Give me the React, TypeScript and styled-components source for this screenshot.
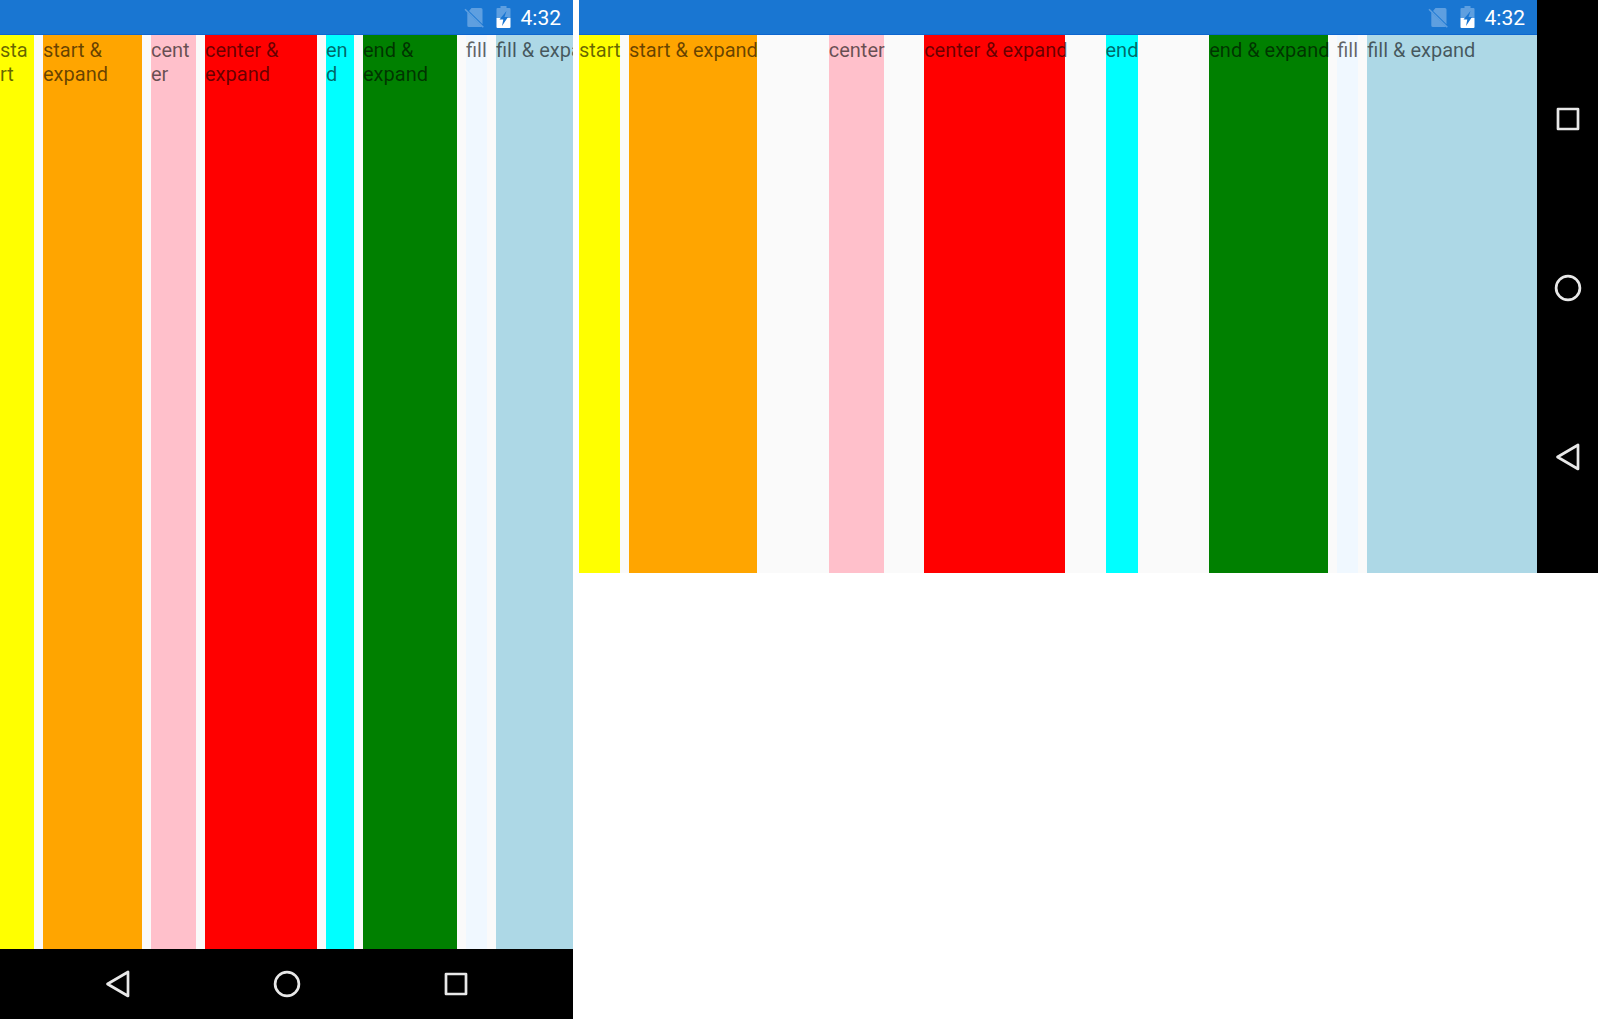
import React from "react";
import styled, { createGlobalStyle } from "styled-components";

const GlobalStyle = createGlobalStyle`
  *, *::before, *::after { box-sizing: border-box; }
  body {
    margin: 0;
    background: #fff;
    font-family: Roboto, "Noto Sans", sans-serif;
  }
`;

type Orientation = "portrait" | "landscape";
type Align = "flex-start" | "center" | "flex-end" | "stretch";

const Page = styled.main`
  display: grid;
  grid-template-columns: 573fr 1019fr;
  gap: 6px;
  align-items: start;
  padding-right: 2px;
`;

const Device = styled.section<{ $orientation: Orientation }>`
  display: flex;
  flex-direction: ${(p) => (p.$orientation === "portrait" ? "column" : "row")};
  min-width: 0;
  overflow: hidden;
  aspect-ratio: ${(p) => (p.$orientation === "portrait" ? "9 / 16" : "16 / 9")};
`;

const Screen = styled.div`
  display: flex;
  flex: 1;
  flex-direction: column;
  min-width: 0;
  min-height: 0;
`;

const StatusBar = styled.header`
  display: flex;
  flex: none;
  align-items: center;
  justify-content: flex-end;
  height: 35px;
  padding: 2px 12px 0 0;
  background: #1976d2;
  border-bottom: 1px solid #0d66cf;
  color: #fff;
`;

const StatusIcon = styled.svg<{ $width: number }>`
  display: block;
  width: ${(p) => p.$width}px;
  height: 24px;
  margin-right: 10px;
`;

const Clock = styled.time`
  font-size: 21px;
  line-height: 24px;
`;

const Stack = styled.div`
  display: flex;
  flex: 1;
  gap: 9px;
  min-height: 0;
  overflow: hidden;
  background: #fafafa;
`;

const Slot = styled.div<{ $basis: number; $expand: boolean; $align: Align }>`
  display: flex;
  flex: ${(p) => (p.$expand ? 1 : 0)} 0 ${(p) => p.$basis}px;
  justify-content: ${(p) => p.$align};
  min-width: 0;
`;

const Label = styled.div<{ $color: string; $basis: number; $fill: boolean; $wrap: boolean }>`
  flex: ${(p) => (p.$fill ? 1 : 0)} 0 ${(p) => p.$basis}px;
  min-width: 0;
  padding-top: 3px;
  background: ${(p) => p.$color};
  color: rgba(0, 0, 0, 0.6);
  font-size: 20px;
  line-height: 24px;
  white-space: ${(p) => (p.$wrap ? "normal" : "nowrap")};
  overflow-wrap: anywhere;
`;

const NavBar = styled.nav<{ $orientation: Orientation }>`
  display: flex;
  flex: 0 0 ${(p) => (p.$orientation === "portrait" ? "70px" : "61px")};
  flex-direction: ${(p) => (p.$orientation === "portrait" ? "row" : "column-reverse")};
  padding: ${(p) => (p.$orientation === "portrait" ? "0 33px" : "34px 0 32px")};
  background: #000;
`;

const NavButton = styled.button`
  display: flex;
  flex: 1;
  align-items: center;
  justify-content: center;
  padding: 0;
  border: 0;
  background: none;
  color: #e8e8e8;
`;

const NavIcon = styled.svg`
  display: block;
  width: 30px;
  height: 30px;
  fill: none;
  stroke: currentColor;
  stroke-width: 2.7;
  stroke-linejoin: round;
`;

interface Item {
  text: string;
  color: string;
  align: Align;
  expand: boolean;
  portrait: number;
  landscape: number;
}

const items: Item[] = [
  { text: "start", color: "yellow", align: "flex-start", expand: false, portrait: 34, landscape: 41 },
  { text: "start & expand", color: "orange", align: "flex-start", expand: true, portrait: 99, landscape: 128 },
  { text: "center", color: "pink", align: "center", expand: false, portrait: 45, landscape: 55 },
  { text: "center & expand", color: "red", align: "center", expand: true, portrait: 112, landscape: 141 },
  { text: "end", color: "cyan", align: "flex-end", expand: false, portrait: 28, landscape: 32 },
  { text: "end & expand", color: "green", align: "flex-end", expand: true, portrait: 94, landscape: 119 },
  { text: "fill", color: "aliceblue", align: "stretch", expand: false, portrait: 21, landscape: 21 },
  { text: "fill & expand", color: "lightblue", align: "stretch", expand: true, portrait: 77, landscape: 107 },
];

function Status() {
  return (
    <StatusBar>
      <StatusIcon $width={22} viewBox="0 0 22 24" aria-hidden="true">
        <path d="M7.500 2H17Q18.500 2 18.500 3.500V18.300L5 5ZM3.300 6.200L18 20.600Q17.700 21 17 21H5Q3.300 21 3.300 19.500Z" fill="#5e9fe0" />
        <path d="M1 3.300L19.300 21.300" stroke="#5e9fe0" strokeWidth="1.600" />
      </StatusIcon>
      <StatusIcon $width={15} viewBox="0 0 15 24" aria-hidden="true">
        <path d="M4.500 0H10.500V2H13.500Q14.500 2 14.500 3V12H0.500V3Q0.500 2 1.500 2H4.500Z" fill="#5e9fe0" />
        <path d="M0.500 12H14.500V21Q14.500 22 13.500 22H1.500Q0.500 22 0.500 21Z" fill="#fff" />
        <path d="M10.500 5L3.500 13.500H7.300L6 20L12 11H8.500Z" fill="#1976d2" />
      </StatusIcon>
      <Clock>4:32</Clock>
    </StatusBar>
  );
}

function Navigation({ orientation }: { orientation: Orientation }) {
  return (
    <NavBar $orientation={orientation} aria-label="System">
      <NavButton aria-label="Back">
        <NavIcon viewBox="0 0 30 30"><path d="M4.500 15L25 3V27Z" /></NavIcon>
      </NavButton>
      <NavButton aria-label="Home">
        <NavIcon viewBox="0 0 30 30"><circle cx="15" cy="15" r="11.900" /></NavIcon>
      </NavButton>
      <NavButton aria-label="Overview">
        <NavIcon viewBox="0 0 30 30"><rect x="5" y="5" width="20" height="20" /></NavIcon>
      </NavButton>
    </NavBar>
  );
}

function Phone({ orientation }: { orientation: Orientation }) {
  return (
    <Device $orientation={orientation}>
      <Screen>
        <Status />
        <Stack>
          {items.map((item) => (
            <Slot key={item.text} $basis={item[orientation]} $expand={item.expand} $align={item.align}>
              <Label
                $color={item.color}
                $basis={item[orientation]}
                $fill={item.align === "stretch"}
                $wrap={orientation === "portrait" && item.align !== "stretch"}
              >
                {item.text}
              </Label>
            </Slot>
          ))}
        </Stack>
      </Screen>
      <Navigation orientation={orientation} />
    </Device>
  );
}

export default function App() {
  return (
    <>
      <GlobalStyle />
      <Page>
        <Phone orientation="portrait" />
        <Phone orientation="landscape" />
      </Page>
    </>
  );
}
